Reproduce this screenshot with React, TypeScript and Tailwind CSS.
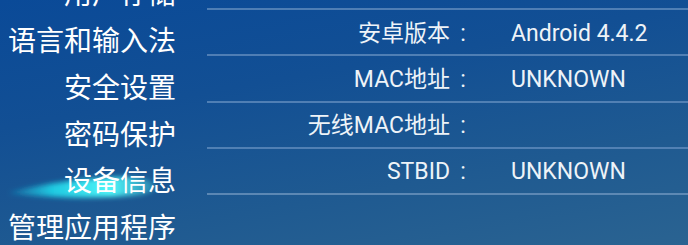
const menu = ['用户存储', '语言和输入法', '安全设置', '密码保护', '设备信息', '管理应用程序']

const info = [
  { label: '安卓版本', value: 'Android 4.4.2' },
  { label: 'MAC地址', value: 'UNKNOWN' },
  { label: '无线MAC地址', value: '' },
  { label: 'STBID', value: 'UNKNOWN' },
]

function Glow() {
  return (
    <svg
      className="pointer-events-none absolute left-0 top-[166px]"
      width="180"
      height="44"
      viewBox="0 0 180 44"
    >
      <defs>
        <filter id="blur" x="-20%" y="-60%" width="140%" height="220%">
          <feGaussianBlur stdDeviation="2.6" />
        </filter>
        <linearGradient id="tail" x1="0" y1="0" x2="1" y2="0">
          <stop offset="0" stopColor="#1aa8d0" stopOpacity="0.3" />
          <stop offset="0.3" stopColor="#1fd0e6" stopOpacity="0.95" />
          <stop offset="0.7" stopColor="#4ff6f8" stopOpacity="1" />
          <stop offset="1" stopColor="#4ff6f8" stopOpacity="0.25" />
        </linearGradient>
      </defs>
      <path
        d="M8 27 C35 19 80 12 125 11 C160 11 165 25 140 29 C100 33 45 32 8 27 Z"
        fill="url(#tail)"
        filter="url(#blur)"
      />
    </svg>
  )
}

export default function App() {
  return (
    <div
      className="relative flex h-[245px] w-[688px] overflow-hidden bg-[linear-gradient(170deg,#0a4a98_0%,#124f94_35%,#1f5a91_70%,#2a6391_100%)] text-white"
      style={{ fontFamily: 'Roboto, "Noto Sans CJK SC", sans-serif' }}
    >
      <Glow />

      {/* 左侧菜单 */}
      <nav className="relative mt-[-28px] flex w-[180px] shrink-0 flex-col pr-[4px] text-right text-[28px] leading-none">
        {menu.map((m) => (
          <div key={m} className="flex h-[46.75px] shrink-0 items-center justify-end whitespace-nowrap">
            {m}
          </div>
        ))}
      </nav>

      {/* 设备信息 */}
      <section className="ml-[27px] mt-[8px] flex flex-1 flex-col text-[23px] leading-none text-[#eef3f8]">
        {info.map((r) => (
          <div
            key={r.label}
            className="flex h-[46.25px] shrink-0 items-center border-t-2 border-[#5f8bbd]/80 pt-[2px]"
          >
            <span className="w-[243px] whitespace-nowrap text-right">{r.label}</span>
            <span className="w-[26px] text-center">:</span>
            <span className="ml-[35px] whitespace-nowrap">{r.value}</span>
          </div>
        ))}
        <div className="border-t-2 border-[#6b93bd]/80" />
      </section>
    </div>
  )
}
